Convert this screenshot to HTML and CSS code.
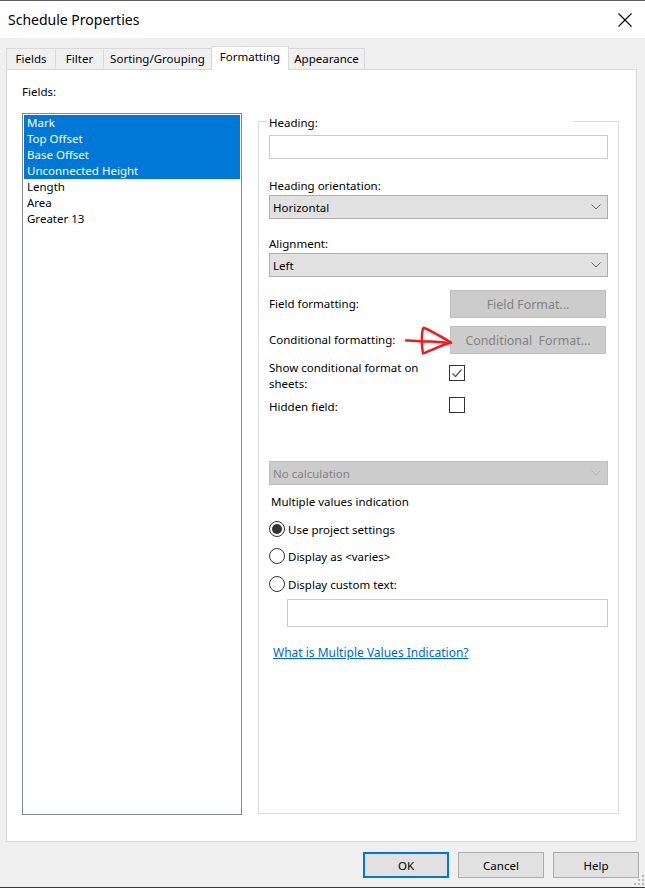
FILE: index.html
```html
<!DOCTYPE html>
<html lang="en">
<head>
    <meta charset="UTF-8">
    <title>Schedule Properties</title>
    <link rel="stylesheet" href="styles.css">
</head>
<body>
    <div class="window">
        <div class="titlebar">
            <span class="title">Schedule Properties</span>
            <svg class="close" width="14" height="14" viewBox="0 0 14 14">
                <path d="M0.5 0.5 L13.5 13.5 M13.5 0.5 L0.5 13.5" stroke="#000" stroke-width="1.1" fill="none"/>
            </svg>
        </div>

        <!-- tab strip -->
        <div class="tabs">
            <div class="tab tab-fields">Fields</div>
            <div class="tab tab-filter">Filter</div>
            <div class="tab tab-sorting">Sorting/Grouping</div>
            <div class="tab tab-formatting active">Formatting</div>
            <div class="tab tab-appearance">Appearance</div>
        </div>

        <div class="panel">
            <div class="fields-col">
                <div class="fields-label">Fields:</div>
                <ul class="listbox">
                    <li class="sel">Mark</li>
                    <li class="sel">Top Offset</li>
                    <li class="sel">Base Offset</li>
                    <li class="sel">Unconnected Height</li>
                    <li>Length</li>
                    <li>Area</li>
                    <li>Greater 13</li>
                </ul>
            </div>

            <fieldset class="group">
                <legend><span>Heading:</span></legend>
                <div class="textbox"></div>

                <div class="flabel">Heading orientation:</div>
                <div class="combo">Horizontal
                    <svg class="chev" width="10" height="6" viewBox="0 0 10 6"><path d="M0.5 0.5 L5 5 L9.5 0.5" stroke="#666" fill="none"/></svg>
                </div>

                <div class="flabel flabel-align">Alignment:</div>
                <div class="combo">Left
                    <svg class="chev" width="10" height="6" viewBox="0 0 10 6"><path d="M0.5 0.5 L5 5 L9.5 0.5" stroke="#666" fill="none"/></svg>
                </div>

                <div class="row row-field">
                    <span class="row-label">Field formatting:</span>
                    <div class="btn-disabled">Field Format...</div>
                </div>
                <div class="row row-cond">
                    <span class="row-label">Conditional formatting:</span>
                    <div class="btn-disabled">Conditional&nbsp; Format...</div>
                    <!-- red hand-drawn arrow -->
                    <svg class="scribble" width="56" height="32" viewBox="0 0 56 32">
                        <path d="M6 15.5 C 14 15, 20 17, 28 16.5 C 36 16, 44 18, 51 18" stroke="#f21b1b" stroke-width="2.4" fill="none" stroke-linecap="round"/>
                        <path d="M23 2.5 C 30 5, 40 11, 51 17.5 C 42 20, 32 25, 23 28.5 C 21.5 20, 21.5 10, 23 2.5" stroke="#f21b1b" stroke-width="2.4" fill="none" stroke-linejoin="round"/>
                    </svg>
                </div>
                <div class="row row-show">
                    <span class="row-label">Show conditional format on<br>sheets:</span>
                    <span class="checkbox checked">
                        <svg width="14" height="14" viewBox="0 0 14 14"><path d="M2.5 7.5 L5.5 10.5 L11.5 3.5" stroke="#555" stroke-width="1.2" fill="none"/></svg>
                    </span>
                </div>
                <div class="row row-hidden">
                    <span class="row-label">Hidden field:</span>
                    <span class="checkbox"></span>
                </div>

                <div class="combo disabled">No calculation
                    <svg class="chev" width="10" height="6" viewBox="0 0 10 6"><path d="M0.5 0.5 L5 5 L9.5 0.5" stroke="#b5b5b5" fill="none"/></svg>
                </div>

                <div class="mvi-label">Multiple values indication</div>
                <div class="radio-row first"><span class="radio on"></span>Use project settings</div>
                <div class="radio-row"><span class="radio"></span>Display as &lt;varies&gt;</div>
                <div class="radio-row third"><span class="radio"></span>Display custom text:</div>
                <div class="textbox custom"></div>

                <a class="help-link" href="#">What is Multiple Values Indication?</a>
            </fieldset>
        </div>

        <div class="buttons">
            <div class="btn default">OK</div>
            <div class="btn">Cancel</div>
            <div class="btn">Help</div>
        </div>

        <svg class="grip" width="12" height="12" viewBox="0 0 12 12">
            <rect x="9" y="1" width="2" height="2" fill="#b8b8b8"/>
            <rect x="5" y="5" width="2" height="2" fill="#b8b8b8"/>
            <rect x="9" y="5" width="2" height="2" fill="#b8b8b8"/>
            <rect x="1" y="9" width="2" height="2" fill="#b8b8b8"/>
            <rect x="5" y="9" width="2" height="2" fill="#b8b8b8"/>
            <rect x="9" y="9" width="2" height="2" fill="#b8b8b8"/>
        </svg>
    </div>
</body>
</html>
```

FILE: styles.css
```css
* {
    box-sizing: border-box;
}
body {
    margin: 0;
    font-family: "Noto Sans", "Liberation Sans", sans-serif;
    font-size: 11.5px;
    color: #000;
    background-color: #f0f0f0;
}
.window {
    position: relative;
    width: 645px;
    height: 888px;
    background-color: #f0f0f0;
    border-top: 1px solid #5e5e5e;
    border-bottom: 1px solid #3a3a3a;
}
.titlebar {
    height: 37px;
    background-color: #fff;
    display: flex;
    align-items: center;
    justify-content: space-between;
    padding: 0 13px 0 8px;
}
.title {
    font-size: 14px;
}

/* tabs */
.tabs {
    display: flex;
    align-items: flex-end;
    height: 23px;
    margin: 8px 0 0 6px;
    position: relative;
    z-index: 1;
}
.tab {
    height: 21px;
    line-height: 16px;
    border: 1px solid #d9d9d9;
    border-bottom: none;
    margin-right: -1px;
    background-color: #f0f0f0;
    display: flex;
    align-items: center;
    justify-content: center;
}
.tab-fields { width: 50px; }
.tab-filter { width: 49px; }
.tab-sorting { width: 109px; }
.tab-formatting { width: 78px; }
.tab-appearance { width: 77px; }
.tab.active {
    height: 24px;
    margin-bottom: -1px;
    background-color: #fff;
    padding-bottom: 3px;
    position: relative;
    z-index: 2;
}

/* main page */
.panel {
    display: flex;
    width: 631px;
    height: 773px;
    margin-left: 6px;
    background-color: #fff;
    border: 1px solid #d9d9d9;
    padding: 14px 0 0 15px;
}
.fields-label {
    line-height: 16px;
}
.listbox {
    list-style: none;
    margin: 13px 0 0 0;
    width: 220px;
    height: 702px;
    padding: 1px;
    border: 1px solid #828790;
}
.listbox li {
    line-height: 16px;
    padding-left: 3px;
}
.listbox li.sel {
    background-color: #0078d7;
    color: #fff;
}

.group {
    width: 361px;
    height: 701px;
    margin: 29px 0 0 16px;
    padding: 0 10px;
    border: 1px solid #dcdcdc;
    min-width: 0;
}
.group legend {
    width: 306px;
    padding: 0 2px;
    margin-left: -2px;
    line-height: 16px;
}
.group legend span {
    position: relative;
    top: 2px;
}
.textbox {
    height: 24px;
    margin-top: 6px;
    border: 1px solid #cccccc;
    background-color: #fff;
}
.flabel {
    line-height: 16px;
    margin-top: 19px;
}
.flabel-align {
    margin-top: 17px;
}
.combo {
    height: 24px;
    margin-top: 1px;
    background-color: #e1e1e1;
    border: 1px solid #adadad;
    display: flex;
    align-items: center;
    justify-content: space-between;
    padding: 0 6px 0 3px;
}
.combo.disabled {
    margin-top: 46px;
    background-color: #cccccc;
    border-color: #bfbfbf;
    color: #838383;
}

.row {
    display: flex;
    align-items: center;
    position: relative;
}
.row-label {
    width: 181px;
    line-height: 16px;
}
.row-field {
    margin-top: 13px;
}
.row-cond {
    margin-top: 8px;
}
.btn-disabled {
    width: 156px;
    height: 28px;
    background-color: #cccccc;
    border: 1px solid #bfbfbf;
    color: #838383;
    font-size: 12.4px;
    display: flex;
    align-items: center;
    justify-content: center;
}
.scribble {
    position: absolute;
    left: 131px;
    top: -1px;
}
.row-show {
    margin-top: 6px;
    align-items: flex-start;
}
.row-show .row-label,
.row-hidden .row-label {
    width: 180px;
}
.row-show .checkbox {
    margin-top: 5px;
}
.row-hidden {
    margin-top: 5px;
    align-items: flex-start;
}
.row-hidden .row-label {
    margin-top: 2px;
}
.checkbox {
    width: 16px;
    height: 16px;
    border: 1px solid #333;
    background-color: #fff;
    display: flex;
    align-items: center;
    justify-content: center;
}

.mvi-label {
    margin-top: 9px;
    padding-left: 2px;
    line-height: 16px;
}
.radio-row {
    height: 20px;
    margin-top: 7px;
    display: flex;
    align-items: center;
}
.radio-row.first {
    margin-top: 9px;
}
.radio-row.third {
    margin-top: 8px;
}
.radio {
    width: 16px;
    height: 16px;
    border: 1px solid #333;
    border-radius: 50%;
    margin-right: 3px;
    background-color: #fff;
    display: flex;
    align-items: center;
    justify-content: center;
}
.radio.on::after {
    content: "";
    width: 10px;
    height: 10px;
    border-radius: 50%;
    background-color: #333;
}
.textbox.custom {
    height: 28px;
    margin: 5px 0 0 18px;
}
.help-link {
    display: block;
    margin-top: 18px;
    padding-left: 4px;
    line-height: 16px;
    font-size: 12px;
    color: #0066cc;
    text-decoration: underline;
}

/* bottom buttons */
.buttons {
    display: flex;
    justify-content: flex-end;
    gap: 9px;
    margin-top: 10px;
    padding-right: 6px;
}
.btn {
    width: 86px;
    height: 26px;
    background-color: #e1e1e1;
    border: 1px solid #adadad;
    display: flex;
    align-items: center;
    justify-content: center;
}
.btn.default {
    border: 2px solid #0078d7;
}
.grip {
    position: absolute;
    right: 0;
    bottom: 1px;
}
```
